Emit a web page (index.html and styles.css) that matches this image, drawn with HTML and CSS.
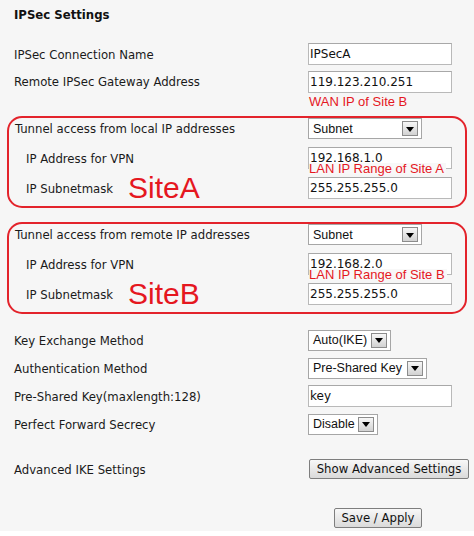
FILE: index.html
```html
<!DOCTYPE html>
<html lang="en">
<head>
    <meta charset="UTF-8">
    <title>IPSec Settings</title>
    <link rel="stylesheet" href="styles.css">
</head>
<body>
    <div class="page">
        <h2 class="title">IPSec Settings</h2>

        <div class="row first">
            <div class="label">IPSec Connection Name</div>
            <div class="ctrl"><input class="text" type="text" value="IPSecA"></div>
        </div>
        <div class="row second">
            <div class="label">Remote IPSec Gateway Address</div>
            <div class="ctrl"><input class="text" type="text" value="119.123.210.251"></div>
        </div>
        <div class="note">WAN IP of Site B</div>

        <!-- local side -->
        <div class="group">
            <div class="row head">
                <div class="label">Tunnel access from local IP addresses</div>
                <div class="ctrl">
                    <div class="select w-subnet"><span>Subnet</span><span class="arrow"></span></div>
                </div>
            </div>
            <div class="row">
                <div class="label sub">IP Address for VPN</div>
                <div class="ctrl">
                    <input class="text" type="text" value="192.168.1.0">
                    <div class="overlay-note">LAN IP Range of Site A</div>
                </div>
            </div>
            <div class="row">
                <div class="label sub"><span class="name">IP Subnetmask</span><span class="site">SiteA</span></div>
                <div class="ctrl"><input class="text" type="text" value="255.255.255.0"></div>
            </div>
        </div>

        <!-- remote side -->
        <div class="group">
            <div class="row head">
                <div class="label">Tunnel access from remote IP addresses</div>
                <div class="ctrl">
                    <div class="select w-subnet"><span>Subnet</span><span class="arrow"></span></div>
                </div>
            </div>
            <div class="row">
                <div class="label sub">IP Address for VPN</div>
                <div class="ctrl">
                    <input class="text" type="text" value="192.168.2.0">
                    <div class="overlay-note">LAN IP Range of Site B</div>
                </div>
            </div>
            <div class="row">
                <div class="label sub"><span class="name">IP Subnetmask</span><span class="site">SiteB</span></div>
                <div class="ctrl"><input class="text" type="text" value="255.255.255.0"></div>
            </div>
        </div>

        <div class="options">
            <div class="row">
                <div class="label">Key Exchange Method</div>
                <div class="ctrl">
                    <div class="select w-ike"><span>Auto(IKE)</span><span class="arrow"></span></div>
                </div>
            </div>
            <div class="row">
                <div class="label">Authentication Method</div>
                <div class="ctrl">
                    <div class="select w-auth"><span>Pre-Shared Key</span><span class="arrow"></span></div>
                </div>
            </div>
            <div class="row">
                <div class="label">Pre-Shared Key(maxlength:128)</div>
                <div class="ctrl"><input class="text" type="text" value="key"></div>
            </div>
            <div class="row">
                <div class="label">Perfect Forward Secrecy</div>
                <div class="ctrl">
                    <div class="select w-pfs"><span>Disable</span><span class="arrow"></span></div>
                </div>
            </div>
        </div>

        <div class="row advanced">
            <div class="label">Advanced IKE Settings</div>
            <div class="ctrl"><button class="btn btn-wide">Show Advanced Settings</button></div>
        </div>

        <div class="row apply">
            <div class="label"></div>
            <div class="ctrl"><button class="btn btn-save">Save / Apply</button></div>
        </div>
    </div>
</body>
</html>
```

FILE: styles.css
```css
body {
    margin: 0;
    background-color: #ffffff;
}

.page {
    background-color: #f6f6f6;
    height: 531px;
    padding: 0 7px;
    font-family: "DejaVu Sans", sans-serif;
    font-stretch: condensed;
    font-size: 13px;
    color: #1a1a1a;
}

.title {
    margin: 0;
    padding: 7px 0 0 7px;
    font-size: 13px;
    line-height: 16px;
    font-weight: bold;
    color: #111;
}

.row {
    display: flex;
    align-items: center;
    padding-left: 7px;
    height: 28px;
}

.row.first {
    margin-top: 17px;
}

.row.second {
    height: 27px;
}

.label {
    width: 294px;
    flex: none;
    display: flex;
    align-items: center;
    white-space: nowrap;
}

.ctrl {
    position: relative;
    display: flex;
    align-items: center;
}

.note {
    padding-left: 302px;
    height: 14px;
    line-height: 14px;
    font-family: "Liberation Sans", sans-serif;
    font-stretch: normal;
    font-size: 13px;
    color: #e5171f;
}

/* red frames round the two sides */
.group {
    margin-top: 7px;
    height: 88px;
    border: 2px solid #e3232b;
    border-radius: 15px;
}

.group + .group {
    margin-top: 14px;
}

.group .row {
    padding-left: 6px;
    height: 22px;
    margin-top: 8px;
}

.group .row.head {
    height: 21px;
    margin-top: 0;
}

.group .label {
    width: 293px;
}

.label.sub {
    padding-left: 11px;
    box-sizing: border-box;
}

.name {
    display: inline-block;
    width: 102px;
}

.site {
    font-family: "Liberation Sans", sans-serif;
    font-stretch: normal;
    font-size: 30px;
    line-height: 20px;
    color: #e5171f;
}

/* annotation pasted over the bottom edge of the address box */
.overlay-note {
    position: absolute;
    left: 1px;
    top: 16px;
    height: 11px;
    line-height: 11px;
    padding-right: 2px;
    background-color: #f8f8f8;
    font-family: "Liberation Sans", sans-serif;
    font-stretch: normal;
    font-size: 13px;
    color: #e5171f;
    white-space: nowrap;
}

input.text {
    width: 144px;
    height: 22px;
    box-sizing: border-box;
    margin: 0;
    padding: 0 0 0 1px;
    border: 1px solid #b9b9b9;
    border-top-color: #a8a8a8;
    background: #fff;
    font-family: "DejaVu Sans", sans-serif;
    font-size: 12px;
    color: #111;
    outline: none;
}

.select {
    display: flex;
    align-items: center;
    height: 21px;
    box-sizing: border-box;
    border: 1px solid #a6a6a6;
    background: #fff;
    padding-left: 4px;
    font-family: "Liberation Sans", sans-serif;
    font-stretch: normal;
    font-size: 12.5px;
    color: #111;
}

.select .arrow {
    margin-left: auto;
    margin-right: 3px;
    width: 14px;
    height: 13px;
    border: 1px solid #8c8c8c;
    background: linear-gradient(#f7f7f7, #d2d2d2);
    display: flex;
    align-items: center;
    justify-content: center;
}

.select .arrow::after {
    content: "";
    border-left: 4px solid transparent;
    border-right: 4px solid transparent;
    border-top: 5px solid #000;
    margin-top: 1px;
}

.w-subnet { width: 114px; }
.w-ike { width: 83px; }
.w-auth { width: 119px; }
.w-pfs { width: 70px; }

.options {
    margin-top: 12px;
}

.row.advanced {
    margin-top: 17px;
}

.row.apply {
    margin-top: 21px;
}

.btn {
    height: 20px;
    margin: 0;
    padding: 0 6px;
    border: 1px solid #7e7e7e;
    border-radius: 2px;
    background: linear-gradient(#f8f8f8, #dadada);
    font-family: "DejaVu Sans", sans-serif;
    font-stretch: condensed;
    font-size: 13px;
    color: #111;
    line-height: 18px;
}

.btn-wide {
    width: 160px;
    margin-left: 1px;
}

.btn-save {
    width: 88px;
    margin-left: 26px;
}
```
